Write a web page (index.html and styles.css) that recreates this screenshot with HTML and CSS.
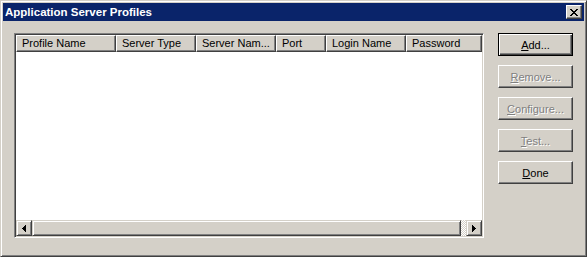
FILE: index.html
```html
<!DOCTYPE html>
<html lang="en">
<head>
  <meta charset="UTF-8">
  <title>Application Server Profiles</title>
  <link rel="stylesheet" href="styles.css">
</head>
<body>
  <div class="window">
    <div class="titlebar">
      <span class="title">Application Server Profiles</span>
      <button class="close" type="button">
        <svg width="8" height="7" viewBox="0 0 8 7" shape-rendering="crispEdges">
          <path d="M0 0h2v1h-2zM6 0h2v1h-2zM1 1h2v1h-2zM5 1h2v1h-2zM2 2h4v1h-4zM3 3h2v1h-2zM2 4h4v1h-4zM1 5h2v1h-2zM5 5h2v1h-2zM0 6h2v1h-2zM6 6h2v1h-2z" fill="#000"/>
        </svg>
      </button>
    </div>
    <div class="content">
      <div class="listview">
        <div class="header">
          <div class="col w100">Profile Name</div>
          <div class="col w80">Server Type</div>
          <div class="col w80">Server Nam...</div>
          <div class="col w50">Port</div>
          <div class="col w80">Login Name</div>
          <div class="col fill">Password</div>
        </div>
        <div class="rows"></div>
        <div class="hscroll">
          <div class="sbtn">
            <svg width="4" height="7" viewBox="0 0 4 7" shape-rendering="crispEdges"><path d="M3 0h1v7h-1zM2 1h1v5h-1zM1 2h1v3h-1zM0 3h1v1h-1z" fill="#000"/></svg>
          </div>
          <div class="thumb"></div>
          <div class="track"></div>
          <div class="sbtn">
            <svg width="4" height="7" viewBox="0 0 4 7" shape-rendering="crispEdges"><path d="M0 0h1v7h-1zM1 1h1v5h-1zM2 2h1v3h-1zM3 3h1v1h-1z" fill="#000"/></svg>
          </div>
        </div>
      </div>
      <div class="buttons">
        <button class="btn default" type="button"><u>A</u>dd...</button>
        <button class="btn" type="button" disabled><u>R</u>emove...</button>
        <button class="btn" type="button" disabled><u>C</u>onfigure...</button>
        <button class="btn" type="button" disabled><u>T</u>est...</button>
        <button class="btn" type="button"><u>D</u>one</button>
      </div>
    </div>
  </div>
</body>
</html>
```

FILE: styles.css
```css
html, body {
  margin: 0;
  padding: 0;
}
body {
  font-family: "Liberation Sans", Arial, sans-serif;
  font-size: 11px;
  color: #000;
  background: #d4d0c8;
}
.window {
  width: 587px;
  height: 257px;
  box-sizing: border-box;
  padding: 2px;
  background: #d4d0c8;
  border: 1px solid;
  border-color: #d4d0c8 #404040 #404040 #d4d0c8;
  box-shadow: inset 1px 1px #fff, inset -1px -1px #808080;
}
.titlebar {
  height: 18px;
  background: #0a246a;
  display: flex;
  align-items: center;
  justify-content: space-between;
  padding: 0 2px;
}
.title {
  color: #fff;
  font-weight: bold;
  font-size: 11.5px;
}
.close {
  width: 16px;
  height: 14px;
  padding: 0;
  margin: 0;
  box-sizing: border-box;
  background: #d4d0c8;
  border: 1px solid;
  border-color: #fff #404040 #404040 #fff;
  box-shadow: inset -1px -1px #808080;
  display: flex;
  align-items: center;
  justify-content: center;
}
.content {
  display: flex;
  gap: 14px;
  padding: 12px 11px 0 11px;
}
.listview {
  width: 470px;
  height: 205px;
  box-sizing: border-box;
  background: #fff;
  border: 1px solid;
  border-color: #808080 #fff #fff #808080;
  box-shadow: inset 1px 1px #404040, inset -1px -1px #d4d0c8;
  padding: 1px;
  display: flex;
  flex-direction: column;
}
.header {
  display: flex;
  height: 17px;
}
.col {
  box-sizing: border-box;
  height: 17px;
  line-height: 15px;
  padding-left: 5px;
  background: #d4d0c8;
  border: 1px solid;
  border-color: #fff #404040 #404040 #fff;
  box-shadow: inset -1px -1px #808080;
  white-space: nowrap;
  overflow: hidden;
}
.w100 { width: 100px; }
.w80 { width: 80px; }
.w50 { width: 50px; }
.fill { flex: 1; }
.rows {
  flex: 1;
}
.hscroll {
  display: flex;
  height: 16px;
}
.sbtn, .thumb {
  box-sizing: border-box;
  height: 16px;
  background: #d4d0c8;
  border: 1px solid;
  border-color: #d4d0c8 #404040 #404040 #d4d0c8;
  box-shadow: inset 1px 1px #fff, inset -1px -1px #808080;
}
.sbtn {
  width: 16px;
  display: flex;
  align-items: center;
  justify-content: center;
}
.thumb {
  flex: 1;
}
.track {
  width: 5px;
  background: repeating-conic-gradient(#fff 0 25%, #d4d0c8 0 50%) 0 0 / 2px 2px;
}
.buttons {
  display: flex;
  flex-direction: column;
  gap: 9px;
}
.btn {
  width: 75px;
  height: 23px;
  box-sizing: border-box;
  padding: 0;
  font-family: inherit;
  font-size: 11px;
  color: #000;
  background: #d4d0c8;
  border: 1px solid;
  border-color: #fff #404040 #404040 #fff;
  box-shadow: inset -1px -1px #808080;
}
.btn u {
  text-underline-offset: 1px;
}
.btn.default {
  border: 1px solid #000;
  box-shadow: inset 1px 1px #fff, inset -1px -1px #404040, inset -2px -2px #808080;
}
.btn:disabled {
  color: #808080;
  text-shadow: 1px 1px #fff;
}
```
